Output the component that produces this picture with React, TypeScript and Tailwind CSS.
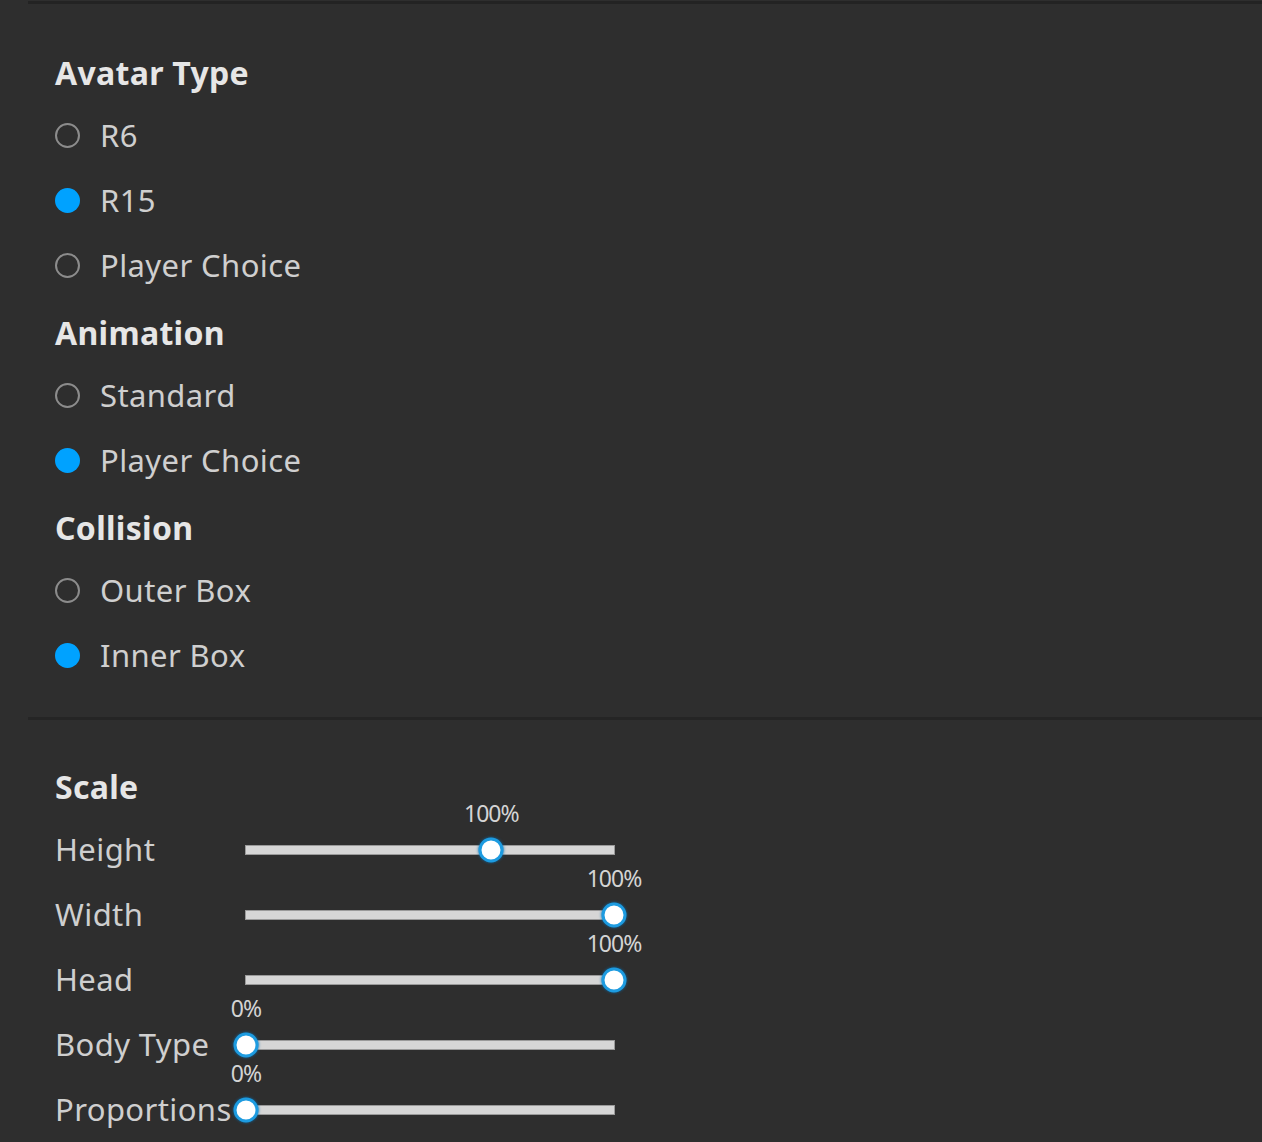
const groups = [
  { title: "Avatar Type", options: ["R6", "R15", "Player Choice"], selected: 1 },
  { title: "Animation", options: ["Standard", "Player Choice"], selected: 1 },
  { title: "Collision", options: ["Outer Box", "Inner Box"], selected: 1 },
];

const scales = [
  { label: "Height", value: 2 / 3, text: "100%" },
  { label: "Width", value: 1, text: "100%" },
  { label: "Head", value: 1, text: "100%" },
  { label: "Body Type", value: 0, text: "0%" },
  { label: "Proportions", value: 0, text: "0%" },
];

function Radio({ checked }: { checked: boolean }) {
  return checked ? (
    <span className="block w-[25px] h-[25px] rounded-full bg-[#00a2ff]" />
  ) : (
    <span className="block w-[25px] h-[25px] rounded-full border-2 border-[#8c8c8c]" />
  );
}

function Slider({ value, text }: { value: number; text: string }) {
  return (
    <div className="relative w-[370px] h-[10px] bg-[#d6d6d6] border border-[#9a9a9a]">
      <div
        className="absolute top-1/2 -translate-x-1/2 -translate-y-1/2 w-[25px] h-[25px] rounded-full bg-white border-[3px] border-[#1d9be0] shadow-[0_0_3px_#0a6aa8] z-10"
        style={{ left: `${value * 100}%` }}
      />
      <span
        className="absolute top-[-50px] -translate-x-1/2 text-[23px] tracking-[-1px] text-[#d4d4d4] whitespace-nowrap"
        style={{ left: `${value * 100}%` }}
      >
        {text}
      </span>
    </div>
  );
}

export default function App() {
  return (
    <div className="w-[1262px] h-[1142px] bg-[#2e2e2e] overflow-hidden font-['Noto_Sans',sans-serif]">
      <div className="ml-[28px] mt-[1px] border-t-[3px] border-[#232323]" />
      <div className="pl-[55px] pt-[34px] pb-[29px]">
        {groups.map((g) => (
          <div key={g.title}>
            <div className="h-[65px] pt-[4px] flex items-center text-[32px] font-bold tracking-[0.3px] text-[#e6e6e6]">{g.title}</div>
            {g.options.map((o, i) => (
              <div key={o} className="h-[65px] flex items-center gap-[20px] text-[31px] tracking-[0.4px] text-[#cfcfcf]">
                <Radio checked={i === g.selected} />
                <span>{o}</span>
              </div>
            ))}
          </div>
        ))}
      </div>
      <div className="ml-[28px] border-t-[3px] border-[#252525]" />
      <div className="pl-[55px] pt-[32px]">
        <div className="h-[65px] pt-[4px] flex items-center text-[32px] font-bold tracking-[0.3px] text-[#e6e6e6]">Scale</div>
        {scales.map((s) => (
          <div key={s.label} className="h-[65px] flex items-center text-[31px] tracking-[0.4px] text-[#cfcfcf]">
            <span className="w-[190px] whitespace-nowrap">{s.label}</span>
            <Slider value={s.value} text={s.text} />
          </div>
        ))}
      </div>
    </div>
  );
}
